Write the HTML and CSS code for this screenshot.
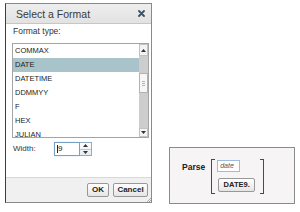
FILE: index.html
```html
<!DOCTYPE html>
<html>
<head>
<meta charset="utf-8">
<link rel="stylesheet" href="styles.css">
</head>
<body>
<div class="page">
  <div class="dialog">
    <div class="titlebar">
      <span class="title">Select a Format</span>
      <svg class="close" width="7" height="7" viewBox="0 0 7 7"><path d="M1 1L6 6M6 1L1 6" stroke="#36526f" stroke-width="1.8" stroke-linecap="round"/></svg>
    </div>
    <div class="body">
      <div class="caption">Format type:</div>
      <div class="listbox">
        <ul class="items">
          <li>COMMAX</li>
          <li class="sel">DATE</li>
          <li>DATETIME</li>
          <li>DDMMYY</li>
          <li>F</li>
          <li>HEX</li>
          <li>JULIAN</li>
        </ul>
        <div class="scrollbar">
          <div class="sb-btn sb-up"><svg width="5" height="3" viewBox="0 0 5 3"><path d="M0 3L2.5 0L5 3Z" fill="#333"/></svg></div>
          <div class="sb-track"></div>
          <div class="sb-thumb"><i></i><i></i><i></i></div>
          <div class="sb-track sb-track-low"></div>
          <div class="sb-btn sb-down"><svg width="5" height="3" viewBox="0 0 5 3"><path d="M0 0L2.5 3L5 0Z" fill="#333"/></svg></div>
        </div>
      </div>
      <div class="width-row">
        <span class="width-label">Width:</span>
        <div class="spin-input"><span class="caret"></span>9</div>
        <div class="spin-btns">
          <div class="spin-half"><svg width="5" height="3" viewBox="0 0 5 3"><path d="M0 3L2.5 0L5 3Z" fill="#333"/></svg></div>
          <div class="spin-half spin-low"><svg width="5" height="3" viewBox="0 0 5 3"><path d="M0 0L2.5 3L5 0Z" fill="#333"/></svg></div>
        </div>
      </div>
    </div>
    <div class="footer">
      <button class="btn btn-ok">OK</button>
      <button class="btn btn-cancel">Cancel</button>
    </div>
    <svg class="grip" width="5" height="5" viewBox="0 0 5 5"><path d="M5 1L1 5M5 3L3 5" stroke="#999" stroke-width="0.8"/></svg>
  </div>

  <div class="panel">
    <span class="parse">Parse</span>
    <div class="bracket-group">
      <div class="br br-left"></div>
      <div class="br-content">
        <div class="date-input">date</div>
        <button class="btn btn-date">DATE9.</button>
      </div>
      <div class="br br-right"></div>
    </div>
  </div>
</div>
</body>
</html>
```

FILE: styles.css
```css
html, body {
  margin: 0;
  padding: 0;
  background: #ffffff;
}
body {
  font-family: "Liberation Sans", Arial, sans-serif;
  width: 300px;
  height: 212px;
  overflow: hidden;
}
.page {
  display: flex;
  align-items: flex-start;
  padding: 3px 0 0 5px;
}

/* dialog */
.dialog {
  box-sizing: border-box;
  width: 147px;
  height: 200px;
  border: 1px solid #8a8a8a;
  border-left: 1px solid #6a2a2a;
  display: flex;
  flex-direction: column;
  background: #ffffff;
  position: relative;
}
.titlebar {
  height: 19px;
  background: linear-gradient(#eeeeee, #e2e2e2);
  border-bottom: 1px solid #c6c6c6;
  display: flex;
  align-items: center;
  justify-content: space-between;
  padding: 0 6px 0 10px;
}
.title {
  font-size: 10.5px;
  color: #3a3a3a;
}
.close {
  display: block;
}
.body {
  padding: 0 2px 0 6px;
  display: flex;
  flex-direction: column;
}
.caption {
  margin-top: 2px;
  padding-left: 1px;
  font-size: 8.5px;
  line-height: 10px;
  color: #333;
}
.listbox {
  margin-top: 7px;
  box-sizing: border-box;
  height: 95px;
  border: 1px solid #a4a4a4;
  display: flex;
  overflow: hidden;
}
.items {
  flex: 1;
  list-style: none;
  margin: 0;
  padding: 0;
}
.items li {
  height: 14px;
  line-height: 14px;
  padding-left: 2px;
  font-size: 7.5px;
  color: #222;
}
.items li.sel {
  background: #a9c3ca;
}
.scrollbar {
  width: 9px;
  display: flex;
  flex-direction: column;
}
.sb-btn {
  box-sizing: border-box;
  background: #f3f3f3;
  border: 1px solid #c2c2c2;
  display: flex;
  align-items: center;
  justify-content: center;
}
.sb-up { height: 12px; }
.sb-down { height: 9px; }
.sb-track {
  height: 17px;
  background: #cdcdcd;
}
.sb-track-low {
  height: 35px;
}
.sb-thumb {
  box-sizing: border-box;
  height: 20px;
  background: #f6f6f6;
  border: 1px solid #b2b2b2;
  display: flex;
  flex-direction: column;
  align-items: center;
  justify-content: center;
  gap: 1px;
}
.sb-thumb i {
  display: block;
  width: 3px;
  height: 1px;
  background: #b5b5b5;
}

.width-row {
  margin-top: 4px;
  height: 14px;
  display: flex;
  align-items: stretch;
}
.width-label {
  width: 42px;
  padding-left: 1px;
  box-sizing: border-box;
  font-size: 8px;
  line-height: 14px;
  color: #333;
}
.spin-input {
  box-sizing: border-box;
  width: 26px;
  border: 1px solid #76a0c6;
  box-shadow: 0 0 1px #a8c8e8;
  background: #fff;
  font-size: 8px;
  line-height: 12px;
  color: #222;
  padding-left: 2px;
  display: flex;
  align-items: center;
}
.caret {
  display: block;
  width: 1px;
  height: 8px;
  background: #222;
}
.spin-btns {
  box-sizing: border-box;
  width: 12px;
  border: 1px solid #8eaecb;
  border-left: none;
  background: linear-gradient(#ffffff, #e6ecf2);
  display: flex;
  flex-direction: column;
}
.spin-half {
  flex: 1;
  display: flex;
  align-items: center;
  justify-content: center;
}
.spin-low {
  border-top: 1px solid #b9c9d8;
}

.footer {
  margin-top: auto;
  box-sizing: border-box;
  height: 25px;
  border-top: 1px solid #d8d8d8;
  background: #f0f0f0;
  display: flex;
  justify-content: flex-end;
  align-items: flex-start;
  gap: 4px;
  padding: 5px 3px 0 0;
}
.btn {
  box-sizing: border-box;
  height: 14px;
  margin: 0;
  padding: 0;
  border: 1px solid #989898;
  border-radius: 2px;
  background: linear-gradient(#ffffff, #e5e5e5);
  font-family: "Liberation Sans", Arial, sans-serif;
  font-weight: bold;
  font-size: 8px;
  color: #222;
  line-height: 12px;
}
.btn-ok { width: 22px; }
.btn-cancel { width: 35px; }
.grip {
  position: absolute;
  right: 0;
  bottom: 0;
}

/* parse panel */
.panel {
  margin: 144px 0 0 17px;
  box-sizing: border-box;
  width: 126px;
  height: 57px;
  border: 1px solid #8a8a8a;
  background: #f6f4f4;
  display: flex;
  align-items: flex-start;
  padding: 11px 0 0 12px;
}
.parse {
  margin-top: 3px;
  font-size: 8.5px;
  font-weight: bold;
  line-height: 10px;
  color: #222;
  margin-right: 6px;
}
.bracket-group {
  display: flex;
  height: 35px;
}
.br {
  box-sizing: border-box;
  width: 4px;
  border: 1px solid #4a4a4a;
}
.br-left { border-right: none; }
.br-right { border-left: none; }
.br-content {
  width: 45px;
  padding-left: 2px;
  box-sizing: border-box;
  display: flex;
  flex-direction: column;
  align-items: flex-start;
}
.date-input {
  margin-top: 1px;
  box-sizing: border-box;
  width: 23px;
  height: 12px;
  border: 1px solid #9cbde0;
  background: #fff;
  font-size: 7px;
  font-style: italic;
  line-height: 10px;
  color: #555;
  padding-left: 2px;
}
.btn-date {
  margin: 6px 0 0 1px;
  width: 37px;
  font-size: 7.5px;
}
```
